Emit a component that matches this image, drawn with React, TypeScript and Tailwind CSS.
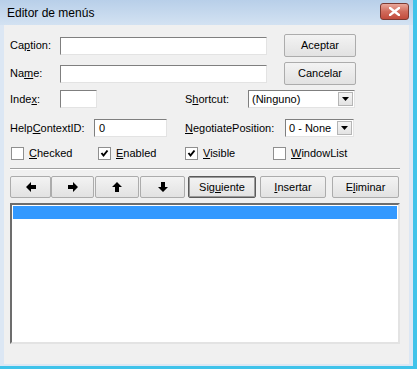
import React from 'react';

// Access-key label: underline a single letter
function Lbl({ pre, key1, post, className = '' }: { pre: string; key1: string; post: string; className?: string }) {
    return (
        <span className={className}>
            {pre}
            <span className="underline underline-offset-[1px]">{key1}</span>
            {post}
        </span>
    );
}

const sunken = 'bg-white border border-t-[#7f7f7f] border-l-[#7f7f7f] border-b-[#e3e3e3] border-r-[#e3e3e3]';

function Btn({ children, w, focused = false }: { children: React.ReactNode; w: string; focused?: boolean }) {
    return (
        <div
            className={`${w} h-full flex items-center justify-center rounded-[2px] bg-gradient-to-b from-[#f3f3f3] to-[#e2e2e2] border ${
                focused ? 'border-[#5a5a5a] shadow-[inset_0_0_0_1px_#9a9a9a]' : 'border-[#acacac]'
            }`}
        >
            {children}
        </div>
    );
}

function Select({ w, value }: { w: string; value: string }) {
    return (
        <div className={`${w} h-[18px] ${sunken} flex items-center justify-between pl-[3px] pr-[1px]`}>
            <span>{value}</span>
            <div className="w-[15px] h-[14px] bg-gradient-to-b from-[#f5f5f5] to-[#e3e3e3] border border-[#b5b5b5] flex items-center justify-center">
                <svg width="7" height="4" viewBox="0 0 7 4">
                    <path d="M0 0h7L3.5 4z" fill="#000" />
                </svg>
            </div>
        </div>
    );
}

function Check({ checked, label, className = '' }: { checked: boolean; label: React.ReactNode; className?: string }) {
    return (
        <div className={`flex items-center gap-[5px] ${className}`}>
            <div className="w-[13px] h-[13px] bg-white border border-[#8f8f8f] flex items-center justify-center">
                {checked && (
                    <svg width="9" height="9" viewBox="0 0 9 9">
                        <path d="M1.5 4l2 2.5L7.5 1.5" stroke="#000" strokeWidth="2" fill="none" />
                    </svg>
                )}
            </div>
            {label}
        </div>
    );
}

function Arrow({ rot }: { rot: number }) {
    return (
        <svg width="10" height="10" viewBox="0 0 10 10" style={{ transform: `rotate(${rot}deg)` }}>
            <path d="M0 5L5 0v3h5v4H5v3z" fill="#000" />
        </svg>
    );
}

export default function App() {
    return (
        <div className="w-[417px] h-[369px] bg-[#3fc3ea] font-['Liberation_Sans',Arial,sans-serif] text-[11px] text-black">
            <div className="w-[413px] h-[366px] bg-[#dce7f4] flex flex-col">
                {/* Title bar */}
                <div className="h-[25px] shrink-0 flex items-center justify-between pl-[7px] pr-[4px] bg-gradient-to-b from-[#b8cfe9] to-[#d3e2f2]">
                    <span className="text-[12px]">Editor de menús</span>
                    <div className="w-[29px] h-[17px] mb-[2px] rounded-[3px] border border-[#7c3a32] bg-gradient-to-b from-[#e9a89c] via-[#d06b5c] to-[#c24b3c] flex items-center justify-center">
                        <svg width="11" height="9" viewBox="0 0 11 9">
                            <path d="M1 1l9 7M10 1l-9 7" stroke="#fff" strokeWidth="2.4" strokeLinecap="square" />
                        </svg>
                    </div>
                </div>

                {/* Client area */}
                <div className="flex-1 mx-[4px] mb-[2px] bg-[#f0f0f0] pl-[6px] flex flex-col">
                    {/* Caption */}
                    <div className="mt-[9px] h-[23px] flex items-center">
                        <Lbl className="w-[50px]" pre="Ca" key1="p" post="tion:" />
                        <div className={`w-[207px] h-[18px] ${sunken}`} />
                        <div className="ml-[17px] h-full">
                            <Btn w="w-[72px]">Aceptar</Btn>
                        </div>
                    </div>
                    {/* Name */}
                    <div className="mt-[5px] h-[23px] flex items-center">
                        <Lbl className="w-[50px]" pre="Na" key1="m" post="e:" />
                        <div className={`w-[207px] h-[18px] ${sunken}`} />
                        <div className="ml-[17px] h-full">
                            <Btn w="w-[72px]">Cancelar</Btn>
                        </div>
                    </div>
                    {/* Index / Shortcut */}
                    <div className="mt-[4px] h-[20px] flex items-center">
                        <Lbl className="w-[50px]" pre="Inde" key1="x" post=":" />
                        <div className={`w-[37px] h-[18px] ${sunken}`} />
                        <Lbl className="ml-[88px] w-[63px]" pre="S" key1="h" post="ortcut:" />
                        <Select w="w-[107px]" value="(Ninguno)" />
                    </div>
                    {/* HelpContextID / NegotiatePosition */}
                    <div className="mt-[9px] h-[20px] flex items-center">
                        <Lbl className="w-[84px]" pre="Help" key1="C" post="ontextID:" />
                        <div className={`w-[73px] h-[18px] ${sunken} pl-[4px] flex items-center`}>0</div>
                        <Lbl className="ml-[18px] w-[100px]" pre="" key1="N" post="egotiatePosition:" />
                        <Select w="w-[69px]" value="0 - None" />
                    </div>
                    {/* Checkboxes */}
                    <div className="mt-[8px] h-[14px] flex items-center pl-[1px]">
                        <Check className="w-[87px]" checked={false} label={<Lbl pre="" key1="C" post="hecked" />} />
                        <Check className="w-[87px]" checked label={<Lbl pre="" key1="E" post="nabled" />} />
                        <Check className="w-[88px]" checked label={<Lbl pre="" key1="V" post="isible" />} />
                        <Check checked={false} label={<Lbl pre="" key1="W" post="indowList" />} />
                    </div>
                    {/* Separator */}
                    <div className="mt-[8px] w-[390px] border-t border-t-[#a0a0a0] border-b border-b-white" />
                    {/* Buttons */}
                    <div className="mt-[6px] h-[22px] flex">
                        <Btn w="w-[41px]"><Arrow rot={0} /></Btn>
                        <Btn w="w-[43px]"><Arrow rot={180} /></Btn>
                        <div className="w-[1px]" />
                        <Btn w="w-[44px]"><Arrow rot={90} /></Btn>
                        <div className="w-[1px]" />
                        <Btn w="w-[45px]"><Arrow rot={-90} /></Btn>
                        <div className="w-[3px]" />
                        <Btn w="w-[68px]" focused>
                            <Lbl pre="Sig" key1="u" post="iente" />
                        </Btn>
                        <div className="w-[4px]" />
                        <Btn w="w-[66px]">
                            <Lbl pre="" key1="I" post="nsertar" />
                        </Btn>
                        <div className="w-[6px]" />
                        <Btn w="w-[67px]">
                            <Lbl pre="E" key1="l" post="iminar" />
                        </Btn>
                    </div>
                    {/* List box */}
                    <div className="mt-[5px] w-[390px] h-[141px] bg-white border-2 border-t-[#6d6d6d] border-l-[#6d6d6d] border-b-[#e3e3e3] border-r-[#e3e3e3] p-[1px]">
                        <div className="h-[13px] bg-[#3399ff]" />
                    </div>
                </div>
            </div>
        </div>
    );
}
